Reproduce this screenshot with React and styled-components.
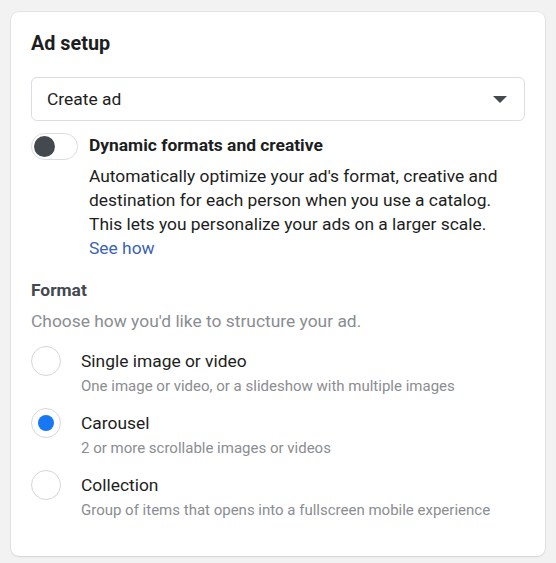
import React, { useState } from 'react';
import styled, { createGlobalStyle } from 'styled-components';

const GlobalStyle = createGlobalStyle`
  html, body {
    margin: 0;
    padding: 0;
    background: #f2f2f2;
  }
  body {
    font-family: Roboto, "Liberation Sans", Arial, sans-serif;
    color: #1c1e21;
    -webkit-font-smoothing: antialiased;
  }
`;

const FORMATS = [
  {
    id: 'single',
    label: 'Single image or video',
    sub: 'One image or video, or a slideshow with multiple images',
  },
  {
    id: 'carousel',
    label: 'Carousel',
    sub: '2 or more scrollable images or videos',
  },
  {
    id: 'collection',
    label: 'Collection',
    sub: 'Group of items that opens into a fullscreen mobile experience',
  },
];

function App() {
  const [format, setFormat] = useState('carousel');
  const [dynamic, setDynamic] = useState(false);

  return (
    <>
      <GlobalStyle />
      <Page>
        <Card>
          <Title>Ad setup</Title>

          <Select>
            <span>Create ad</span>
            <Caret />
          </Select>

          <ToggleRow>
            <Toggle
              $on={dynamic}
              onClick={() => setDynamic(!dynamic)}
              aria-pressed={dynamic}
            >
              <Knob $on={dynamic} />
            </Toggle>
            <ToggleText>
              <ToggleTitle>Dynamic formats and creative</ToggleTitle>
              <Description>
                Automatically optimize your ad's format, creative and
                destination for each person when you use a catalog. This lets
                you personalize your ads on a larger scale.
                <br />
                <Link href="#">See how</Link>
              </Description>
            </ToggleText>
          </ToggleRow>

          <SectionHeader>Format</SectionHeader>
          <Hint>Choose how you'd like to structure your ad.</Hint>

          <Options>
            {FORMATS.map((f) => (
              <Option key={f.id} onClick={() => setFormat(f.id)}>
                <Radio $checked={format === f.id} />
                <OptionLabel>{f.label}</OptionLabel>
                <OptionSub>{f.sub}</OptionSub>
              </Option>
            ))}
          </Options>
        </Card>
      </Page>
    </>
  );
}

const Page = styled.div`
  padding: 12px 11px 8px 11px;
`;

const Card = styled.div`
  background: #fff;
  border-radius: 8px;
  box-shadow: 0 0 0 1px rgba(0, 0, 0, 0.05), 0 1px 2px rgba(0, 0, 0, 0.08);
  padding: 19px 20px 36px 20px;
`;

const Title = styled.h2`
  margin: 0;
  font-size: 19.8px;
  line-height: 26px;
  font-weight: 700;
  color: #1c1e21;
`;

const Select = styled.div`
  margin-top: 20px;
  height: 44px;
  box-sizing: border-box;
  border: 1px solid #dadde1;
  border-radius: 6px;
  display: flex;
  align-items: center;
  justify-content: space-between;
  padding: 0 17px 0 15px;
  font-size: 17.4px;
  color: #1c1e21;
`;

const Caret = styled.span`
  width: 0;
  height: 0;
  border-left: 7px solid transparent;
  border-right: 7px solid transparent;
  border-top: 7px solid #444950;
  margin-top: 1px;
`;

const ToggleRow = styled.div`
  display: flex;
  align-items: flex-start;
  gap: 11px;
  margin-top: 12px;
`;

const Toggle = styled.button`
  position: relative;
  flex: none;
  width: 47px;
  height: 27px;
  padding: 0;
  border: 1px solid #dadde1;
  border-radius: 14px;
  background: ${(p) => (p.$on ? '#1877f2' : '#fff')};
  cursor: pointer;
`;

const Knob = styled.span`
  position: absolute;
  top: 2px;
  left: ${(p) => (p.$on ? '23px' : '2px')};
  width: 21px;
  height: 21px;
  border-radius: 50%;
  background: ${(p) => (p.$on ? '#fff' : '#444950')};
`;

const ToggleText = styled.div`
  display: flex;
  flex-direction: column;
`;

const ToggleTitle = styled.div`
  font-size: 17.4px;
  line-height: 24px;
  font-weight: 700;
  color: #1c1e21;
`;

const Description = styled.div`
  margin-top: 7px;
  font-size: 17.4px;
  line-height: 24px;
  color: #1c1e21;
`;

const Link = styled.a`
  color: #3a62b5;
  text-decoration: none;
`;

const SectionHeader = styled.div`
  margin-top: 18px;
  font-size: 17.4px;
  line-height: 24px;
  font-weight: 700;
  color: #444950;
`;

const Hint = styled.div`
  margin-top: 7px;
  font-size: 17.4px;
  line-height: 24px;
  color: #8a8d91;
`;

const Options = styled.div`
  display: flex;
  flex-direction: column;
  gap: 15px;
  margin-top: 16px;
`;

const Option = styled.div`
  display: grid;
  grid-template-columns: 30px 1fr;
  column-gap: 20px;
  row-gap: 3px;
  cursor: pointer;
`;

const Radio = styled.span`
  grid-row: 1;
  grid-column: 1;
  align-self: center;
  margin: -3px 0;
  box-sizing: border-box;
  width: 30px;
  height: 30px;
  border: 1px solid #d3d6db;
  border-radius: 50%;
  display: flex;
  align-items: center;
  justify-content: center;

  &::after {
    content: '';
    width: 16px;
    height: 16px;
    border-radius: 50%;
    background: #1877f2;
    display: ${(p) => (p.$checked ? 'block' : 'none')};
  }
`;

const OptionLabel = styled.div`
  grid-row: 1;
  grid-column: 2;
  font-size: 17.4px;
  line-height: 24px;
  color: #1c1e21;
`;

const OptionSub = styled.div`
  grid-row: 2;
  grid-column: 2;
  font-size: 15px;
  line-height: 20px;
  color: #8a8d91;
`;

export default App;
